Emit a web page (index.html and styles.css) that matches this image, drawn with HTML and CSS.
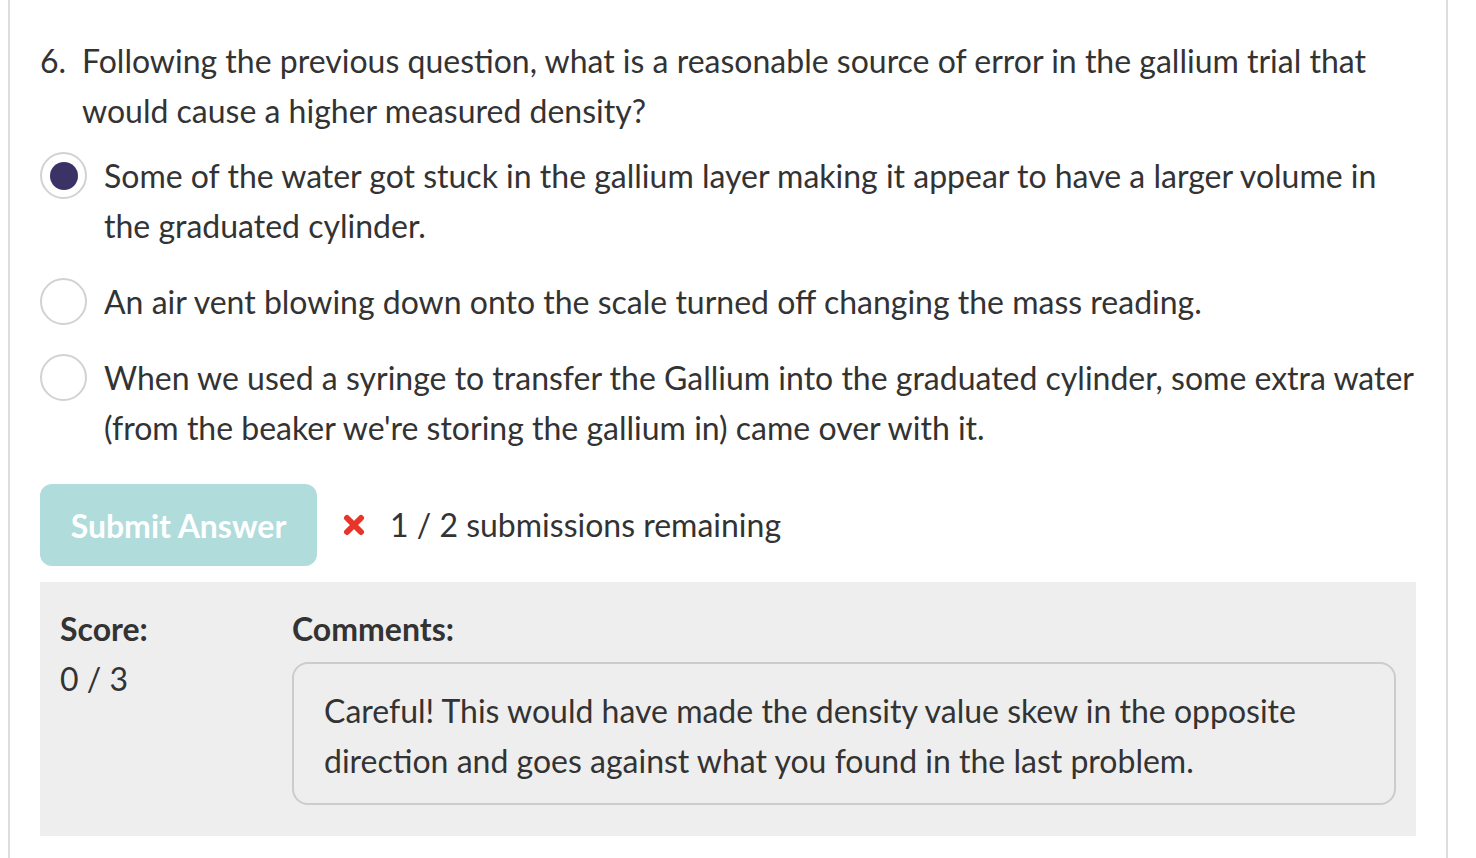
FILE: index.html
```html
<!DOCTYPE html>
<html>
<head>
<meta charset="utf-8">
<link rel="stylesheet" href="styles.css">
</head>
<body>
<div class="panel">
  <div class="question">
    <span class="qnum">6.</span>
    <span class="qtext">Following the previous question, what is a reasonable source of error in the gallium trial that would cause a higher measured density?</span>
  </div>
  <div class="options">
    <label class="option">
      <span class="radio checked"><span class="dot"></span></span>
      <span class="otext">Some of the water got stuck in the gallium layer making it appear to have a larger volume in the graduated cylinder.</span>
    </label>
    <label class="option">
      <span class="radio"></span>
      <span class="otext">An air vent blowing down onto the scale turned off changing the mass reading.</span>
    </label>
    <label class="option">
      <span class="radio"></span>
      <span class="otext">When we used a syringe to transfer the Gallium into the graduated cylinder, some extra water (from the beaker we're storing the gallium in) came over with it.</span>
    </label>
  </div>
  <div class="actions">
    <button class="submit">Submit Answer</button>
    <svg class="xmark" width="22" height="22" viewBox="0 0 22 22"><path d="M4 4 L18 18 M18 4 L4 18" stroke="#e8352a" stroke-width="6" stroke-linecap="round"/></svg>
    <span class="remaining">1 / 2 submissions remaining</span>
  </div>
  <div class="feedback">
    <div class="score">
      <div class="label">Score:</div>
      <div class="value">0 / 3</div>
    </div>
    <div class="comments">
      <div class="label">Comments:</div>
      <div class="commentbox">Careful! This would have made the density value skew in the opposite direction and goes against what you found in the last problem.</div>
    </div>
  </div>
</div>
</body>
</html>
```

FILE: styles.css
```css
html, body {
  background: #ffffff;
}
body {
  margin: 0 28px 0 8px;
  font-family: Lato, "Open Sans", sans-serif;
  color: #333333;
  font-size: 32px;
  line-height: 50px;
}
.panel {
  border-left: 2px solid #dddddd;
  border-right: 2px solid #dddddd;
  padding: 36px 30px 30px 30px;
  min-height: 860px;
  box-sizing: border-box;
}
.question {
  display: flex;
}
.qnum {
  flex: 0 0 42px;
}
.qtext {
  flex: 1;
}
.options {
  display: flex;
  flex-direction: column;
  gap: 26px;
  margin-top: 15px;
}
.option {
  display: flex;
  align-items: flex-start;
}
.radio {
  flex: 0 0 auto;
  width: 43px;
  height: 43px;
  border: 2px solid #d2d2d2;
  border-radius: 50%;
  margin-top: 1px;
  margin-right: 17px;
  display: flex;
  align-items: center;
  justify-content: center;
  background: #fff;
}
.dot {
  width: 28px;
  height: 28px;
  border-radius: 50%;
  background: #3b3366;
}
.otext {
  flex: 1;
}
.actions {
  display: flex;
  align-items: center;
  margin-top: 31px;
}
.submit {
  font-family: Lato, "Open Sans", sans-serif;
  font-weight: 700;
  font-size: 32px;
  color: #ffffff;
  background: #b0dcdc;
  border: none;
  border-radius: 12px;
  width: 277px;
  height: 82px;
  padding: 0;
  cursor: default;
}
.xmark {
  margin-left: 26px;
  margin-right: 25px;
}
.feedback {
  display: flex;
  background: #eeeeee;
  margin-top: 16px;
  padding: 22px 20px 31px 20px;
}
.score {
  flex: 0 0 232px;
}
.label {
  font-weight: 700;
}
.comments {
  flex: 1;
}
.commentbox {
  margin-top: 8px;
  border: 2px solid #cccccc;
  border-radius: 16px;
  padding: 22px 30px 17px 30px;
}
```
